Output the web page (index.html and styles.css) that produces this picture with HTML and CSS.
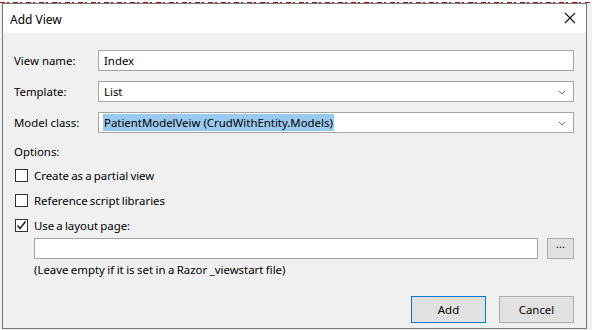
FILE: index.html
```html
<!DOCTYPE html>
<html>
<head>
<meta charset="utf-8">
<link rel="stylesheet" href="styles.css">
</head>
<body>
<div class="bgstrip"></div>
<div class="window">
  <div class="titlebar">
    <span class="title">Add View</span>
    <span class="close">
      <svg width="12" height="12" viewBox="0 0 12 12"><path d="M1 1 L11 11 M11 1 L1 11" stroke="#111" stroke-width="1.1" fill="none"/></svg>
    </span>
  </div>
  <div class="content">
    <div class="row">
      <span class="label">View name:</span>
      <div class="field">Index</div>
    </div>
    <div class="row">
      <span class="label">Template:</span>
      <div class="field combo">List<span class="chev"><svg width="8" height="5" viewBox="0 0 8 5"><path d="M1 1 L4 4 L7 1" stroke="#777" stroke-width="1" fill="none"/></svg></span></div>
    </div>
    <div class="row">
      <span class="label">Model class:</span>
      <div class="field combo"><span class="sel">PatientModelVeiw (CrudWithEntity.Models)</span><span class="chev"><svg width="8" height="5" viewBox="0 0 8 5"><path d="M1 1 L4 4 L7 1" stroke="#777" stroke-width="1" fill="none"/></svg></span></div>
    </div>
    <div class="options">Options:</div>
    <div class="check"><span class="box"></span><span>Create as a partial view</span></div>
    <div class="check"><span class="box"></span><span>Reference script libraries</span></div>
    <div class="check"><span class="box"><svg width="11" height="11" viewBox="0 0 11 11"><path d="M1.5 5.5 L4 8.5 L9.5 1.5" stroke="#222" stroke-width="1.6" fill="none"/></svg></span><span>Use a layout page:</span></div>
    <div class="layoutrow">
      <div class="field layout"></div>
      <div class="btn small">...</div>
    </div>
    <div class="note">(Leave empty if it is set in a Razor _viewstart file)</div>
    <div class="buttons">
      <div class="btn default">Add</div>
      <div class="btn">Cancel</div>
    </div>
  </div>
</div>
</body>
</html>
```
FILE: styles.css
```css
html, body {
  margin: 0;
  padding: 0;
}
body {
  width: 592px;
  height: 330px;
  background: #f0f0f0;
  font-family: "Noto Sans", "Liberation Sans", sans-serif;
  font-size: 11.4px;
  color: #000;
  overflow: hidden;
}
.bgstrip {
  height: 3px;
  background:
    repeating-linear-gradient(90deg, #a31515 0 5px, #fff 5px 7px, #a31515 7px 9px, #fff 9px 13px) bottom / 100% 1px no-repeat,
    #fff;
}
.window {
  margin-left: 2px;
  width: 583px;
  height: 324px;
  border: 1px solid #777;
  background: #f0f0f0;
  display: flex;
  flex-direction: column;
}
.titlebar {
  flex: none;
  height: 29px;
  background: #fff;
  display: flex;
  align-items: center;
  justify-content: space-between;
  padding-left: 7px;
  padding-right: 10px;
}
.title {
  font-size: 12px;
  color: #000;
  margin-top: 1px;
}
.close {
  display: flex;
  align-items: center;
  margin-top: -2px;
}
.content {
  flex: 1;
  padding: 17px 12px 0 11px;
  display: flex;
  flex-direction: column;
}
.row {
  display: flex;
  align-items: center;
  height: 21px;
  margin-bottom: 10px;
}
.label {
  width: 84px;
  flex: none;
}
.field {
  flex: 1;
  height: 19px;
  border: 1px solid #a5a5a5;
  background: #fff;
  display: flex;
  align-items: center;
  padding-left: 5px;
  box-sizing: content-box;
  position: relative;
}
.combo .chev {
  position: absolute;
  right: 7px;
  top: 8px;
  display: flex;
}
.sel {
  background: #99c9ef;
  margin-left: -1px;
  padding: 0 1px;
  line-height: 17px;
}
.options {
  margin-top: 1px;
  height: 16px;
  line-height: 16px;
}
.check {
  display: flex;
  align-items: center;
  height: 13px;
  margin-top: 9px;
  margin-bottom: 3px;
  word-spacing: -0.8px;
}
.check + .check {
  margin-top: 9px;
}
.box {
  width: 11px;
  height: 11px;
  border: 1px solid #333;
  background: #fff;
  margin-left: 1px;
  margin-right: 6px;
  display: flex;
  align-items: center;
  justify-content: center;
}
.layoutrow {
  display: flex;
  margin-top: 3px;
  margin-left: 20px;
  height: 21px;
  gap: 9px;
}
.layout {
  height: 19px;
}
.btn {
  width: 73px;
  height: 25px;
  border: 1px solid #adadad;
  background: #e1e1e1;
  display: flex;
  align-items: center;
  justify-content: center;
}
.btn.small {
  width: 25px;
  height: 19px;
  font-size: 11px;
  line-height: 10px;
  align-items: flex-start;
}
.btn.default {
  border-color: #0078d7;
}
.note {
  margin-left: 20px;
  margin-top: 3px;
  height: 16px;
  line-height: 16px;
  font-size: 11.4px;
  word-spacing: -0.5px;
}
.buttons {
  display: flex;
  justify-content: flex-end;
  gap: 13px;
  margin-top: 18px;
}
```
